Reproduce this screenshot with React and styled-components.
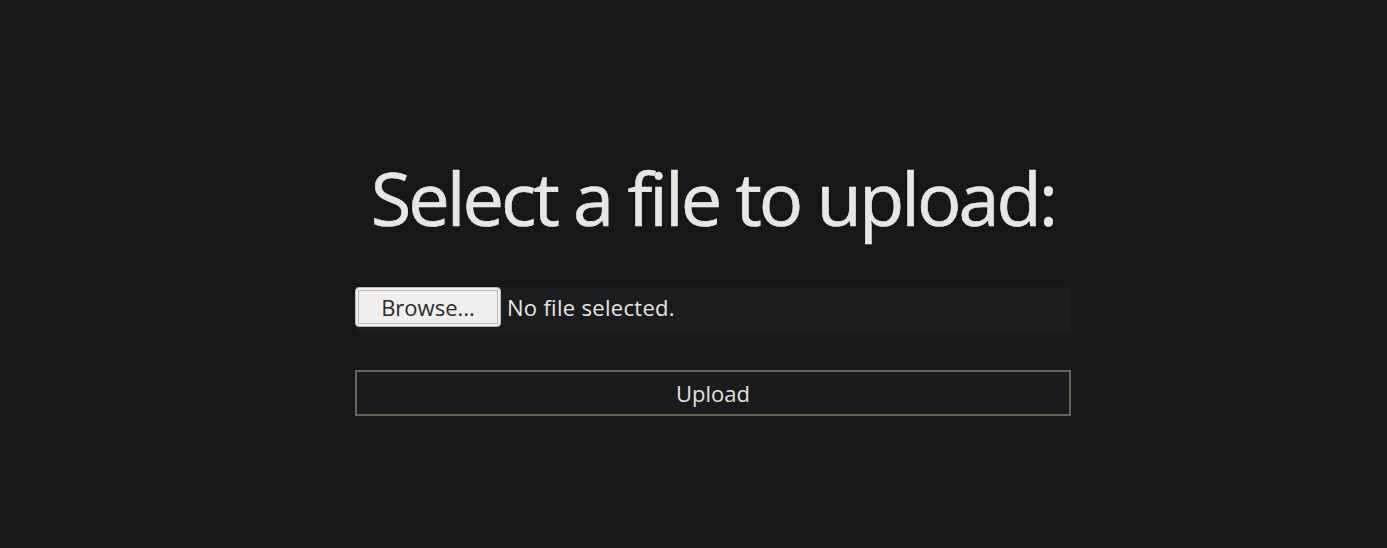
import React from 'react'
import styled, { createGlobalStyle } from 'styled-components'

const GlobalStyle = createGlobalStyle`
  html, body {
    margin: 0;
    padding: 0;
    background: #161719;
  }
  body {
    font-family: "Open Sans", "Noto Sans", sans-serif;
    color: #e8e6e3;
  }
`

const Page = styled.main`
  box-sizing: border-box;
  width: 100%;
  height: 548px;
  padding-left: 39px;
  display: flex;
  justify-content: center;
`

const Form = styled.form`
  width: 716px;
  padding-top: 156px;
  display: flex;
  flex-direction: column;
`

const Title = styled.h1`
  margin: 0 0 47px;
  text-align: center;
  font-family: "Open Sans", sans-serif;
  font-weight: 400;
  font-size: 74px;
  line-height: 84px;
  letter-spacing: -3px;
  color: #e8e6e3;
  -webkit-text-stroke: 0.6px #e8e6e3;
`

const FileRow = styled.label`
  display: flex;
  align-items: flex-start;
  height: 45px;
  background: #1b1c1e;
  cursor: pointer;

  input {
    display: none;
  }
`

const Browse = styled.span`
  box-sizing: border-box;
  width: 146px;
  height: 40px;
  display: flex;
  align-items: center;
  justify-content: center;
  background: #f0efee;
  border: 1px solid #b9b9b9;
  border-radius: 4px;
  box-shadow: inset 0 0 0 2px #f0efee, inset 0 0 0 3px #b8b8b8;
  color: #2b2b2b;
  font-size: 22px;
`

const FileName = styled.span`
  margin-left: 6px;
  line-height: 40px;
  font-size: 22px;
  letter-spacing: 0.3px;
  color: #e8e6e3;
`

const UploadButton = styled.button`
  margin-top: 38px;
  box-sizing: border-box;
  height: 46px;
  background: #1a1b1d;
  border: 2px solid #6a6458;
  color: #e3e1de;
  font-family: "Open Sans", sans-serif;
  font-size: 22px;
  cursor: pointer;
`

export default function App() {
  return (
    <Page>
      <GlobalStyle />
      <Form onSubmit={e => e.preventDefault()}>
        <Title>Select a file to upload:</Title>
        <FileRow>
          <input type="file" />
          <Browse>Browse...</Browse>
          <FileName>No file selected.</FileName>
        </FileRow>
        <UploadButton type="submit">Upload</UploadButton>
      </Form>
    </Page>
  )
}
